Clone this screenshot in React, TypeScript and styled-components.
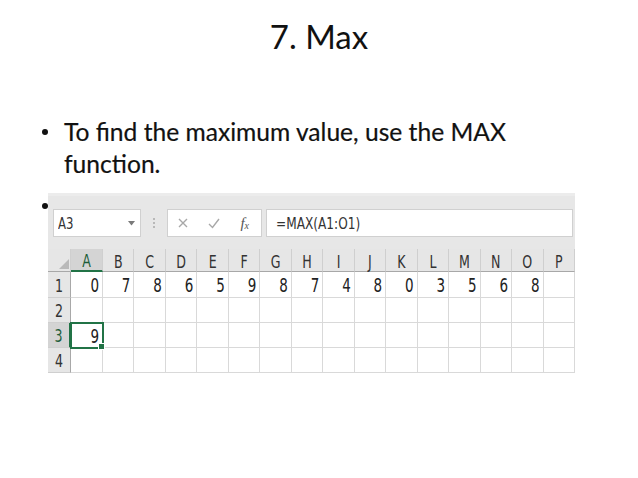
import React from "react";
import styled, { createGlobalStyle } from "styled-components";

const Global = createGlobalStyle`
  html, body { margin: 0; padding: 0; background: #ffffff; }
  #root { width: 638px; height: 478px; overflow: hidden; }
`;

const Slide = styled.div`
  width: 638px;
  height: 478px;
  box-sizing: border-box;
  padding-top: 16px;
  display: flex;
  flex-direction: column;
  font-family: Lato, "Open Sans", sans-serif;
  color: #111;
  background: #fff;
`;

const Title = styled.h1`
  margin: 0;
  font-weight: 400;
  font-size: 33px;
  line-height: 40px;
  text-align: center;
`;

const List = styled.div`
  margin-top: 60px;
  padding-left: 42px;
  display: flex;
  flex-direction: column;
`;

const Item = styled.div<{ $gap: number; $top?: number }>`
  display: flex;
  align-items: flex-start;
  gap: ${(p) => p.$gap}px;
  margin-top: ${(p) => p.$top ?? 0}px;
`;

const Bullet = styled.span<{ $top: number }>`
  flex: none;
  width: 6px;
  height: 6px;
  border-radius: 50%;
  background: #111;
  margin-top: ${(p) => p.$top}px;
`;

const BodyText = styled.p`
  margin: 0;
  width: 530px;
  font-size: 24.6px;
  line-height: 32px;
  -webkit-text-stroke: 0.2px #111;
`;

/* ---------- spreadsheet ---------- */

const Sheet = styled.div`
  width: 527px;
  background: #e7e7e7;
  font-family: "Liberation Sans Narrow", "DejaVu Sans Condensed", "Liberation Sans", sans-serif;
  display: flex;
  flex-direction: column;
`;

const Toolbar = styled.div`
  height: 56px;
  box-sizing: border-box;
  padding: 13px 2px 12px 5px;
  display: flex;
  align-items: stretch;
  border-top: 3px solid #ececec;
`;

const NameBox = styled.div`
  width: 88px;
  box-sizing: border-box;
  background: #fff;
  border: 1px solid #d0d0d0;
  display: flex;
  align-items: center;
  justify-content: space-between;
  padding: 0 5px 0 4px;
  font-size: 13px;
  color: #333;
`;

const Tall = styled.span<{ $scale?: number }>`
  display: inline-block;
  transform: scaleY(${(p) => p.$scale ?? 1.25});
`;

const Dots = styled.div`
  width: 26px;
  display: flex;
  flex-direction: column;
  align-items: center;
  justify-content: center;
  gap: 2px;
  span {
    width: 2px;
    height: 2px;
    background: #b8b8b8;
  }
`;

const FuncBox = styled.div`
  width: 95px;
  box-sizing: border-box;
  background: #fff;
  border: 1px solid #d0d0d0;
  display: flex;
  align-items: center;
  justify-content: space-between;
  padding: 0 12px 0 10px;
`;

const Fx = styled.span`
  font-family: "Liberation Serif", serif;
  font-style: italic;
  font-size: 15px;
  color: #555;
  sub {
    font-size: 10px;
    vertical-align: -1px;
  }
`;

const Formula = styled.div`
  flex: 1;
  margin-left: 4px;
  box-sizing: border-box;
  background: #fff;
  border: 1px solid #d0d0d0;
  display: flex;
  align-items: center;
  padding-left: 9px;
  font-size: 13.5px;
  color: #333;
`;

const Grid = styled.div`
  display: grid;
  grid-template-columns: 23px 32px repeat(15, 1fr);
  grid-template-rows: 23px 26px 25px 25px 25px;
  background: #fff;
`;

const Corner = styled.div`
  background: #e6e6e6;
  border-right: 1px solid #cfcfcf;
  border-bottom: 1px solid #a8a8a8;
  display: flex;
  align-items: flex-end;
  justify-content: flex-end;
  padding: 0 1px 2px 0;
`;

const ColHead = styled.div<{ $active?: boolean }>`
  background: ${(p) => (p.$active ? "#d4d4d4" : "#e6e6e6")};
  border-right: 1px solid #cfcfcf;
  border-bottom: ${(p) => (p.$active ? "2px solid #217346" : "1px solid #a8a8a8")};
  display: flex;
  align-items: center;
  justify-content: center;
  font-size: 14px;
  color: ${(p) => (p.$active ? "#1e5e3a" : "#333")};
  padding-top: 3px;
  box-sizing: border-box;
`;

const RowHead = styled.div<{ $active?: boolean }>`
  background: ${(p) => (p.$active ? "#d4d4d4" : "#e6e6e6")};
  border-right: ${(p) => (p.$active ? "2px solid #217346" : "1px solid #a8a8a8")};
  border-bottom: 1px solid #cfcfcf;
  display: flex;
  align-items: center;
  justify-content: center;
  font-size: 14px;
  color: ${(p) => (p.$active ? "#1e5e3a" : "#333")};
  box-sizing: border-box;
  padding-top: 2px;
`;

const Cell = styled.div<{ $selected?: boolean }>`
  position: relative;
  border-right: 1px solid #d9d9d9;
  border-bottom: 1px solid #d9d9d9;
  display: flex;
  align-items: center;
  justify-content: flex-end;
  padding: 3px 3px 0 0;
  font-size: 15px;
  color: #222;
  box-sizing: border-box;
  ${(p) =>
    p.$selected &&
    `
    outline: 2px solid #217346;
    outline-offset: -1px;
    z-index: 1;
  `}
`;

const FillHandle = styled.span`
  position: absolute;
  right: -3px;
  bottom: -3px;
  width: 5px;
  height: 5px;
  background: #217346;
  border: 1px solid #fff;
`;

const cols = "ABCDEFGHIJKLMNOP".split("");
const row1: (number | "")[] = [0, 7, 8, 6, 5, 9, 8, 7, 4, 8, 0, 3, 5, 6, 8, ""];

function Spreadsheet() {
  const rows = [1, 2, 3, 4];
  return (
    <Sheet>
      <Toolbar>
        <NameBox>
          <Tall $scale={1.2}>A3</Tall>
          <svg width="7" height="5" viewBox="0 0 7 5">
            <path d="M0 0 L7 0 L3.5 4.5 Z" fill="#7a7a7a" />
          </svg>
        </NameBox>
        <Dots>
          <span />
          <span />
          <span />
        </Dots>
        <FuncBox>
          <svg width="10" height="10" viewBox="0 0 10 10">
            <path d="M1 1 L9 9 M9 1 L1 9" stroke="#a8a8a8" strokeWidth="1.4" fill="none" />
          </svg>
          <svg width="12" height="11" viewBox="0 0 12 11">
            <path d="M1 6 L4.5 9.5 L11 1" stroke="#a8a8a8" strokeWidth="1.4" fill="none" />
          </svg>
          <Fx>
            f<sub>x</sub>
          </Fx>
        </FuncBox>
        <Formula>
          <Tall $scale={1.2}>=MAX(A1:O1)</Tall>
        </Formula>
      </Toolbar>
      <Grid>
        <Corner>
          <svg width="10" height="10" viewBox="0 0 10 10">
            <path d="M10 0 L10 10 L0 10 Z" fill="#b9b9b9" />
          </svg>
        </Corner>
        {cols.map((c) => (
          <ColHead key={c} $active={c === "A"}>
            <Tall>{c}</Tall>
          </ColHead>
        ))}
        {rows.map((r) => (
          <React.Fragment key={r}>
            <RowHead $active={r === 3}>
              <Tall>{r}</Tall>
            </RowHead>
            {cols.map((c, i) => {
              const selected = r === 3 && i === 0;
              let v: number | "" = "";
              if (r === 1) v = row1[i];
              if (selected) v = 9;
              return (
                <Cell key={c} $selected={selected}>
                  {v !== "" && <Tall>{v}</Tall>}
                  {selected && <FillHandle />}
                </Cell>
              );
            })}
          </React.Fragment>
        ))}
      </Grid>
    </Sheet>
  );
}

export default function App() {
  return (
    <>
      <Global />
      <Slide>
        <Title>7. Max</Title>
        <List>
          <Item $gap={16}>
            <Bullet $top={13} />
            <BodyText>To find the maximum value, use the MAX function.</BodyText>
          </Item>
          <Item $gap={0} $top={13}>
            <Bullet $top={10} />
            <Spreadsheet />
          </Item>
        </List>
      </Slide>
    </>
  );
}
